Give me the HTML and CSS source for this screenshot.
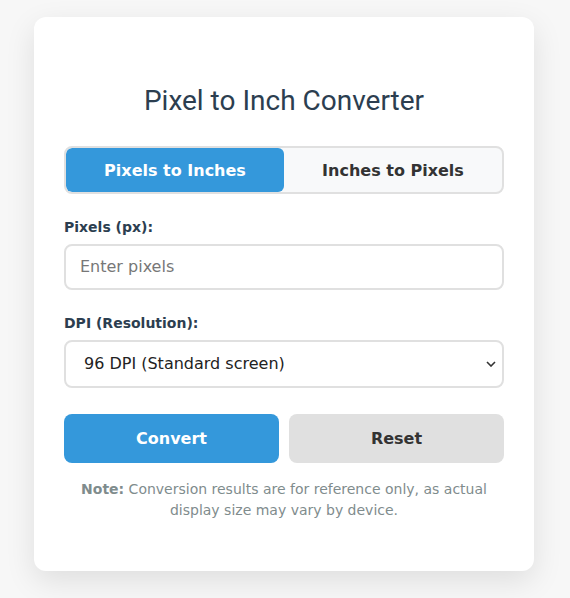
FILE: index.html
```html
<!DOCTYPE html>
<html lang="en">
<head>
<meta charset="utf-8">
<title>Pixel to Inch Converter</title>
<link rel="stylesheet" href="styles.css">
</head>
<body>
<div class="card">
  <h1 class="title">Pixel to Inch Converter</h1>
  <div class="toggle">
    <button class="toggle-btn active">Pixels to Inches</button>
    <button class="toggle-btn">Inches to Pixels</button>
  </div>
  <div class="group">
    <label class="label" for="px">Pixels (px):</label>
    <input class="field" id="px" type="text" placeholder="Enter pixels">
  </div>
  <div class="group">
    <label class="label" for="dpi">DPI (Resolution):</label>
    <select class="field select" id="dpi">
      <option>96 DPI (Standard screen)</option>
      <option>72 DPI</option>
      <option>150 DPI</option>
      <option>300 DPI (Print)</option>
    </select>
  </div>
  <div class="actions">
    <button class="btn primary">Convert</button>
    <button class="btn secondary">Reset</button>
  </div>
  <p class="note"><strong>Note:</strong> Conversion results are for reference only, as actual display size may vary by device.</p>
</div>
</body>
</html>
```

FILE: styles.css
```css
html, body {
  margin: 0;
  padding: 0;
}
body {
  background: #f7f7f7;
  font-family: "DejaVu Sans", Verdana, sans-serif;
  padding-top: 17px;
  min-height: 598px;
  box-sizing: border-box;
}
.card {
  width: 500px;
  box-sizing: border-box;
  margin: 0 0 0 34px;
  background: #fff;
  border-radius: 12px;
  box-shadow: 0 10px 30px rgba(0, 0, 0, 0.1);
  padding: 30px 30px 50px;
}
.title {
  font-family: Roboto, "Liberation Sans", sans-serif;
  font-weight: 400;
  font-size: 28px;
  color: #2c3e50;
  text-align: center;
  margin: 37px 0 29px;
  line-height: 33px;
}
.toggle {
  display: flex;
  border: 2px solid #e0e0e0;
  border-radius: 8px;
  background: #f8f9fa;
  overflow: hidden;
  margin-bottom: 24px;
}
.toggle-btn {
  flex: 1;
  border: 0;
  background: transparent;
  font-family: "DejaVu Sans", Verdana, sans-serif;
  font-weight: bold;
  font-size: 16px;
  line-height: 20px;
  padding: 13px 0 11px;
  color: #333;
  border-radius: 6px;
}
.toggle-btn.active {
  background: #3498db;
  color: #fff;
}
.group {
  margin-bottom: 24px;
}
.label {
  display: block;
  font-weight: bold;
  font-size: 14px;
  line-height: 18px;
  color: #2c3e50;
  margin-bottom: 8px;
}
.field {
  display: block;
  width: 100%;
  box-sizing: border-box;
  border: 2px solid #e0e0e0;
  border-radius: 8px;
  font-family: "DejaVu Sans", Verdana, sans-serif;
  font-size: 16px;
  line-height: 18px;
  padding: 12px 14px;
  color: #222;
  background: #fff;
  outline: none;
}
.field::placeholder {
  color: #777;
}
.select {
  height: 48px;
  padding: 0 30px 0 18px;
  -webkit-appearance: none;
  appearance: none;
  background: #fff url("data:image/svg+xml;utf8,<svg xmlns='http://www.w3.org/2000/svg' width='10' height='6' viewBox='0 0 10 6'><path d='M1 1l4 4 4-4' fill='none' stroke='%23333' stroke-width='1.6'/></svg>") no-repeat right 6px center;
}
.actions {
  display: flex;
  gap: 10px;
  margin-top: 26px;
}
.btn {
  flex: 1;
  border: 0;
  border-radius: 8px;
  font-family: "DejaVu Sans", Verdana, sans-serif;
  font-weight: bold;
  font-size: 16px;
  line-height: 19px;
  padding: 15px 0;
}
.primary {
  background: #3498db;
  color: #fff;
}
.secondary {
  background: #e0e0e0;
  color: #333;
}
.note {
  margin: 16px 0 0;
  text-align: center;
  font-size: 14px;
  line-height: 21px;
  color: #7f8c8d;
}
```
